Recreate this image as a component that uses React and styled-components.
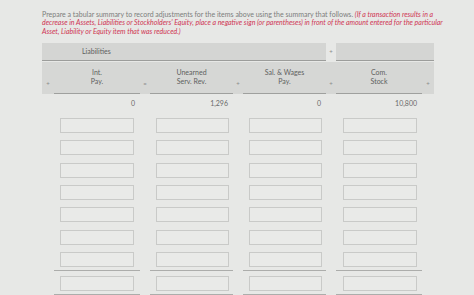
import React from "react";
import styled, { createGlobalStyle } from "styled-components";

const GlobalStyle = createGlobalStyle`
  html, body {
    margin: 0;
    padding: 0;
    background: #e7e8e6;
    font-family: Lato, "Open Sans", sans-serif;
  }
`;

const Page = styled.div`
  width: 474px;
  height: 295px;
  overflow: hidden;
  padding: 10px 0 0 42px;
  box-sizing: border-box;
`;

const Prompt = styled.p`
  margin: 0;
  width: 420px;
  font-size: 7px;
  line-height: 8.3px;
  color: #7c7d7c;
  white-space: nowrap;
`;

const Note = styled.em`
  color: #cf3553;
  font-style: italic;
`;

const Table = styled.div`
  margin-top: 8px;
  display: grid;
  grid-template-columns: 12px 86px 10px 83px 10px 83px 10px 86px 12px;
  width: 392px;
`;

const GroupBand = styled.div`
  grid-column: ${(p) => p.span};
  height: 17px;
  background: #d4d5d3;
  border-bottom: 1px solid #9c9d9b;
  font-size: 7px;
  color: #5e5f5e;
  display: flex;
  align-items: center;
  padding-left: 40px;
`;

const GroupOp = styled.div`
  height: 17px;
  display: flex;
  align-items: center;
  justify-content: center;
  font-size: 6px;
  color: #8a8b8a;
`;

const HeadCell = styled.div`
  margin-top: 1px;
  height: 32px;
  background: #d6d7d5;
  border-bottom: 1px solid ${(p) => (p.op ? "#d6d7d5" : "#9fa09e")};
  display: flex;
  align-items: center;
  justify-content: center;
  text-align: center;
  font-size: ${(p) => (p.op ? "6px" : "7px")};
  line-height: 9px;
  color: ${(p) => (p.op ? "#8a8b8a" : "#5e5f5e")};
  padding-top: ${(p) => (p.op ? "12px" : "0")};
  box-sizing: border-box;
`;

const Value = styled.div`
  height: 19px;
  padding: 5px 5px 0 0;
  text-align: right;
  font-size: 7px;
  color: #6a6b6a;
`;

const Spacer = styled.div``;

const InputCell = styled.div`
  height: ${(p) => (p.total ? "18px" : "22.4px")};
  padding: 0 ${(p) => p.pr}px 0 ${(p) => p.pl}px;
  border-bottom: ${(p) => (p.total ? "1.5px solid #acadab" : "none")};
  margin-bottom: ${(p) => (p.total ? "4.5px" : "0")};
  box-sizing: content-box;
`;

const Box = styled.div`
  height: 13px;
  border: 1px solid #c9cac8;
  background: #e9eae8;
`;

const cols = [
  { name: ["Int.", "Pay."], value: "0", pl: 6, pr: 6 },
  { name: ["Unearned", "Serv. Rev."], value: "1,296", pl: 6, pr: 4 },
  { name: ["Sal. & Wages", "Pay."], value: "0", pl: 6, pr: 4 },
  { name: ["Com.", "Stock"], value: "10,800", pl: 7, pr: 5 },
];
const ops = ["+", "=", "+", "+", "+"];
const rows = [false, false, false, false, false, false, true, true];

export default function App() {
  return (
    <Page>
      <GlobalStyle />
      <Prompt>
        Prepare a tabular summary to record adjustments for the items above
        using the summary that follows.{" "}
        <Note>
          (If a transaction results in a
          <br />
          decrease in Assets, Liabilities or Stockholders' Equity, place a
          negative sign (or parentheses) in front of the amount entered for the
          particular
          <br />
          Asset, Liability or Equity item that was reduced.)
        </Note>
      </Prompt>
      <Table>
        <GroupBand span="1 / 7">Liabilities</GroupBand>
        <GroupOp>+</GroupOp>
        <GroupBand span="8 / 10" />

        {cols.map((c, i) => (
          <React.Fragment key={"h" + i}>
            <HeadCell op>{ops[i]}</HeadCell>
            <HeadCell>
              {c.name[0]}
              <br />
              {c.name[1]}
            </HeadCell>
          </React.Fragment>
        ))}
        <HeadCell op>{ops[4]}</HeadCell>

        {cols.map((c, i) => (
          <React.Fragment key={"v" + i}>
            <Spacer />
            <Value>{c.value}</Value>
          </React.Fragment>
        ))}
        <Spacer />

        {rows.map((total, r) =>
          cols.map((c, i) => (
            <React.Fragment key={r + "-" + i}>
              <Spacer />
              <InputCell total={total} pl={c.pl} pr={c.pr}>
                <Box />
              </InputCell>
              {i === 3 && <Spacer />}
            </React.Fragment>
          ))
        )}
      </Table>
    </Page>
  );
}
